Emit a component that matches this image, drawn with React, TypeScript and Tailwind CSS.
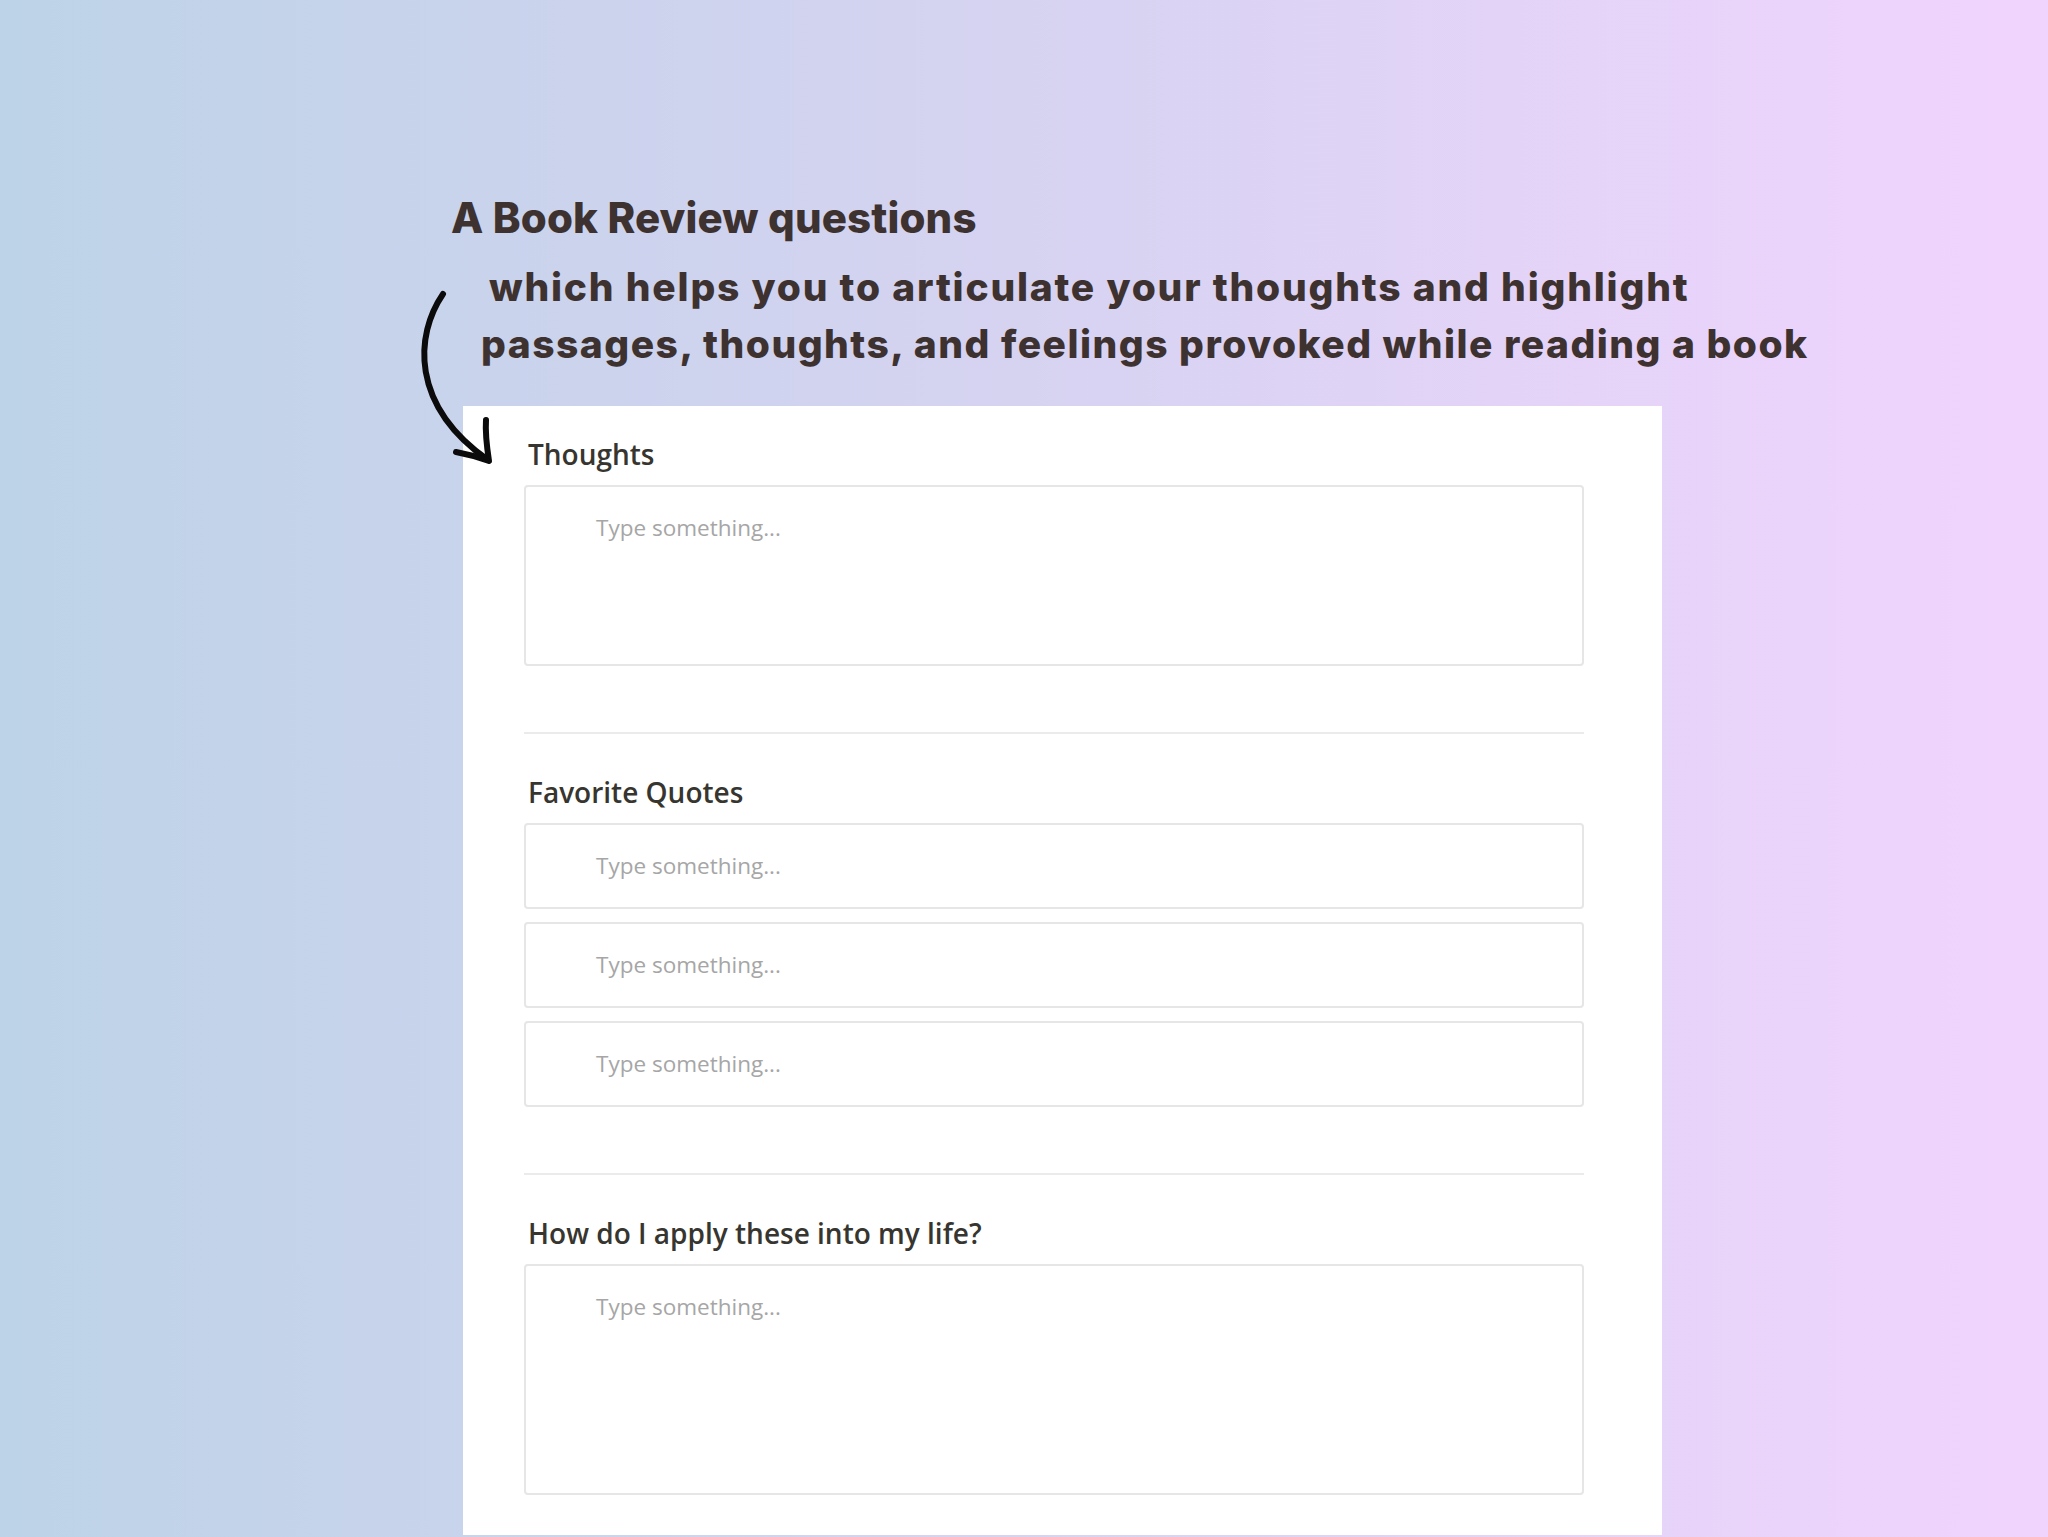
import React from "react";

const headingFont = { fontFamily: "Inter, 'Open Sans', sans-serif" };

const Field = ({ tall }: { tall?: number }) => {
  if (tall) {
    return (
      <div
        className="w-full rounded-[4px] border-2 border-[#e6e6e6] bg-white pl-[70px] pt-[26px]"
        style={{ height: tall }}
      >
        <p className="font-['Open_Sans',sans-serif] text-[22.5px] leading-[30px] text-[#a6a6a6]">
          Type something...
        </p>
      </div>
    );
  }
  return (
    <div className="flex h-[86px] w-full items-center rounded-[4px] border-2 border-[#e6e6e6] bg-white pl-[70px]">
      <p className="font-['Open_Sans',sans-serif] text-[22.5px] leading-[30px] text-[#a6a6a6]">
        Type something...
      </p>
    </div>
  );
};

const Label = ({ children }: { children: React.ReactNode }) => (
  <h3 className="mb-[13px] pl-[4px] font-['Open_Sans',sans-serif] text-[28px] font-semibold leading-[36px] text-[#37352f]">
    {children}
  </h3>
);

const Divider = () => <div className="mt-[66px] h-[2px] w-full bg-[#ebebeb]" />;

export default function App() {
  return (
    <div className="relative flex h-[1537px] w-full flex-col overflow-hidden bg-linear-to-r from-[#bdd3e8] via-[#d6d3f1] to-[#f1d4fe]">
      {/* Title */}
      <div className="pl-[451px] pt-[193px]">
        <h1
          className="text-[42px] font-extrabold leading-[50px] tracking-[0.003em] text-[#3d3230]"
          style={headingFont}
        >
          A Book Review questions
        </h1>
      </div>
      <div
        className="mt-[15px] pl-[481px] text-[39px] font-extrabold leading-[57px] text-[#3d3230]"
        style={headingFont}
      >
        <p className="pl-[8px] tracking-[0.046em]">
          which helps you to articulate your thoughts and highlight
        </p>
        <p className="tracking-[0.038em]">
          passages, thoughts, and feelings provoked while reading a book
        </p>
      </div>

      {/* Hand-drawn arrow */}
      <svg
        className="pointer-events-none absolute left-[410px] top-[280px] h-[200px] w-[100px]"
        viewBox="0 0 100 200"
        fill="none"
      >
        <path
          d="M33 14 C 5 55, 0 125, 78 180"
          stroke="#0b0b0b"
          strokeWidth="6"
          strokeLinecap="round"
        />
        <path
          d="M76 140 C 75 155, 77 168, 79 181 C 68 177, 57 174, 46 172"
          stroke="#0b0b0b"
          strokeWidth="6"
          strokeLinecap="round"
          strokeLinejoin="round"
        />
      </svg>

      {/* Card */}
      <div className="mb-[2px] ml-[463px] mt-[34px] w-[1199px] flex-1 bg-white pl-[61px] pt-[30px]">
        <div className="w-[1060px]">
          <Label>Thoughts</Label>
          <Field tall={181} />
          <Divider />

          <div className="mt-[40px]">
            <Label>Favorite Quotes</Label>
            <div className="flex flex-col gap-[13px]">
              <Field />
              <Field />
              <Field />
            </div>
          </div>
          <Divider />

          <div className="mt-[40px]">
            <Label>How do I apply these into my life?</Label>
            <Field tall={231} />
          </div>
        </div>
      </div>
    </div>
  );
}
